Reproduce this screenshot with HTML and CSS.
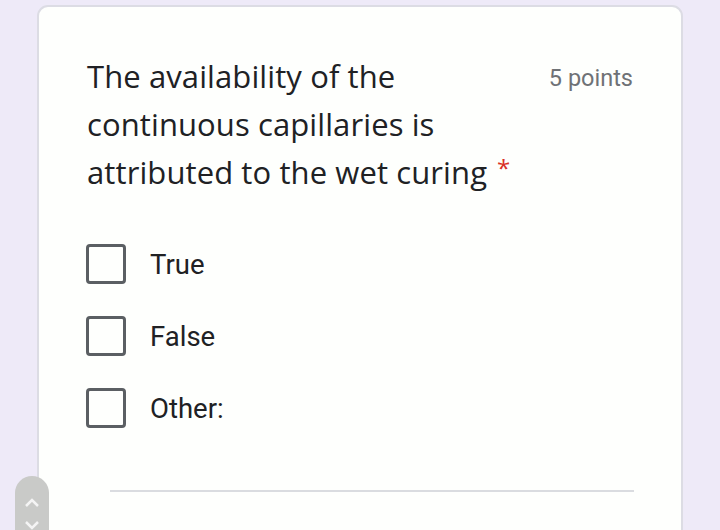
FILE: index.html
```html
<!DOCTYPE html>
<html>
<head>
<meta charset="utf-8">
<link rel="stylesheet" href="styles.css">
</head>
<body>
<div class="page">
  <div class="card">
    <div class="head">
      <div class="title">The availability of the continuous capillaries is attributed to the wet curing<span class="req">*</span></div>
      <div class="points">5 points</div>
    </div>
    <div class="options">
      <div class="opt"><span class="box"></span><span class="label">True</span></div>
      <div class="opt"><span class="box"></span><span class="label">False</span></div>
      <div class="opt"><span class="box"></span><span class="label">Other:</span></div>
    </div>
    <div class="other-line"></div>
  </div>
  <div class="scroller">
    <svg width="34" height="56" viewBox="0 0 34 56">
      <path d="M11 30 L17 24 L23 30" fill="none" stroke="#f4f4f4" stroke-width="2.5"/>
      <path d="M11 46 L17 52 L23 46" fill="none" stroke="#f4f4f4" stroke-width="2.5"/>
    </svg>
  </div>
</div>
</body>
</html>
```

FILE: styles.css
```css
html, body {
  margin: 0;
  padding: 0;
  width: 720px;
  height: 530px;
  overflow: hidden;
  background: #eeeaf8;
}
.page {
  position: relative;
  width: 720px;
  height: 530px;
  padding: 5px 0 0 37px;
  box-sizing: border-box;
  overflow: hidden;
}
.card {
  width: 646px;
  height: 560px;
  box-sizing: border-box;
  background: #fefffd;
  border: 2px solid #dcdce4;
  border-radius: 11px;
  padding: 45px 48px 0 48px;
  font-family: "Open Sans", sans-serif;
}
.head {
  display: flex;
  justify-content: space-between;
  align-items: flex-start;
}
.title {
  width: 450px;
  font-family: "Open Sans", sans-serif;
  font-size: 31px;
  line-height: 48px;
  color: #202124;
  letter-spacing: 0.1px;
}
.req {
  color: #d93025;
  margin-left: 10px;
  font-size: 24px;
  vertical-align: top;
  position: relative;
  top: -4px;
}
.points {
  font-family: Roboto, sans-serif;
  font-size: 23.5px;
  color: #6f7276;
  line-height: 48px;
  margin-top: 2px;
}
.options {
  margin-top: 48px;
  display: flex;
  flex-direction: column;
  gap: 32px;
}
.opt {
  display: flex;
  align-items: center;
  height: 40px;
}
.box {
  width: 40px;
  height: 40px;
  box-sizing: border-box;
  border: 3.5px solid #5b5f63;
  border-radius: 4px;
  margin-left: -1px;
}
.label {
  margin-left: 24px;
  font-family: Roboto, sans-serif;
  font-size: 27.5px;
  color: #202124;
}
.other-line {
  margin: 62px 0 0 23px;
  height: 2px;
  background: #dadce0;
  width: 524px;
}
.scroller {
  position: absolute;
  left: 15px;
  top: 476px;
  width: 34px;
  height: 60px;
  background: #c9cac8;
  border-radius: 17px 17px 0 0;
}
.scroller svg {
  display: block;
}
```
